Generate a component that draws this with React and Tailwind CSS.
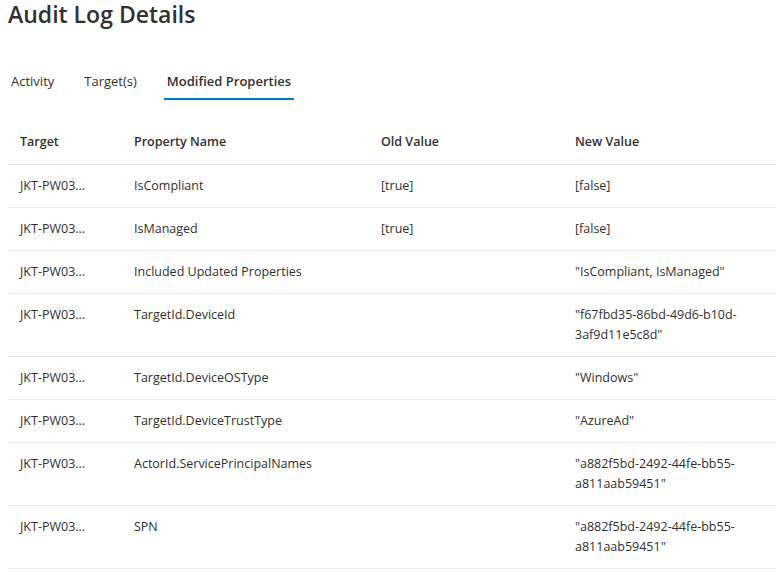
const rows = [
  { target: "JKT-PW03…", name: "IsCompliant", oldValue: "[true]", newValue: "[false]" },
  { target: "JKT-PW03…", name: "IsManaged", oldValue: "[true]", newValue: "[false]" },
  { target: "JKT-PW03…", name: "Included Updated Properties", oldValue: "", newValue: "\"IsCompliant, IsManaged\"" },
  { target: "JKT-PW03…", name: "TargetId.DeviceId", oldValue: "", newValue: "\"f67fbd35-86bd-49d6-b10d-3af9d11e5c8d\"" },
  { target: "JKT-PW03…", name: "TargetId.DeviceOSType", oldValue: "", newValue: "\"Windows\"" },
  { target: "JKT-PW03…", name: "TargetId.DeviceTrustType", oldValue: "", newValue: "\"AzureAd\"" },
  { target: "JKT-PW03…", name: "ActorId.ServicePrincipalNames", oldValue: "", newValue: "\"a882f5bd-2492-44fe-bb55-a811aab59451\"" },
  { target: "JKT-PW03…", name: "SPN", oldValue: "", newValue: "\"a882f5bd-2492-44fe-bb55-a811aab59451\"" },
];

const tabs = ["Activity", "Target(s)", "Modified Properties"];

const App = () => {
  return (
    <div className="min-h-screen bg-white text-[#323130] font-['Open_Sans',sans-serif] overflow-hidden">
      <h1 className="pl-2 text-[23px] leading-[28px] font-semibold">Audit Log Details</h1>

      <div className="flex gap-6 pl-2 mt-[41px]">
        {tabs.map((tab, i) => (
          <div
            key={tab}
            className={
              i === 2
                ? "px-[3px] pt-[3px] pb-[8px] text-[13px] leading-[18px] font-semibold border-b-2 border-[#0078d4]"
                : "px-[3px] pt-[3px] pb-[8px] text-[13px] leading-[18px] border-b-2 border-transparent"
            }
          >
            {tab}
          </div>
        ))}
      </div>

      <div className="ml-2 mt-[21px] text-[12.5px]">
        <div className="grid grid-cols-[114px_247px_194px_1fr] h-[44px] items-center border-b border-[#edebe9] font-semibold">
          <div className="px-3">Target</div>
          <div className="px-3">Property Name</div>
          <div className="px-3">Old Value</div>
          <div className="px-3">New Value</div>
        </div>
        {rows.map((row, i) => (
          <div
            key={i}
            className="grid grid-cols-[114px_247px_194px_1fr] py-[11px] leading-5 border-b border-[#edebe9]"
          >
            <div className="px-3 truncate">{row.target}</div>
            <div className="px-3">{row.name}</div>
            <div className="px-3">{row.oldValue}</div>
            <div className="pl-3 pr-4 break-words">{row.newValue}</div>
          </div>
        ))}
      </div>
    </div>
  );
};

export default App;
